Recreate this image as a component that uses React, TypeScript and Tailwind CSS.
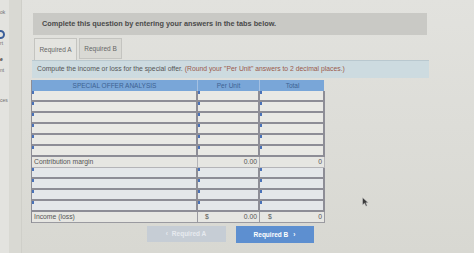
import React from "react";

const font = { fontFamily: '"Liberation Sans", Arial, sans-serif' };

function Tick() {
  return <span className="absolute left-0 top-0 w-[2px] h-[3px] bg-[#4a72b8]" />;
}

function InputRow({ tint }: { tint?: boolean }) {
  const cell =
    "relative h-[11px] border-b-2 border-r-2 border-[#8d8d96] " +
    (tint ? "bg-[#e4e7ea]" : "bg-[#e9e9e5]");
  return (
    <div className="grid grid-cols-[166px_62px_65px]">
      <div className={cell}>
        <Tick />
      </div>
      <div className={cell}>
        <Tick />
      </div>
      <div className={cell}>
        <Tick />
      </div>
    </div>
  );
}

export default function App() {
  return (
    <div
      className="relative w-[474px] h-[253px] flex overflow-hidden bg-gradient-to-b from-[#e2e2de] to-[#d8d8d2]"
      style={font}
    >
      {/* left strip */}
      <div className="w-[9px] shrink-0 flex flex-col bg-[#e3e3df] text-[5px] text-[#707070] leading-none">
        <span className="mt-[10px]">ok</span>
        <span className="mt-[15px] -ml-[4px] w-[9px] h-[9px] rounded-full border-2 border-[#3b5f9a]" />
        <span className="mt-[2px]">rt</span>
        <span className="mt-[11px] text-[#333] font-bold">e</span>
        <span className="mt-[6px]">nt</span>
        <span className="mt-[25px]">ces</span>
      </div>
      <div className="w-[13px] shrink-0 bg-[#d9d9d3] border-r border-[#cfcfc9]" />

      {/* main */}
      <div className="flex-1 flex flex-col pl-[10px] pt-[13px]">
        <div className="ml-[1px] w-[394px] h-[22px] bg-[#c9c9c5] flex items-center pl-[9px] text-[7.3px] font-bold text-[#4a4a4a] whitespace-nowrap">
          Complete this question by entering your answers in the tabs below.
        </div>

        <div className="flex gap-[2px] ml-[2px] mt-[3px] h-[22px]">
          <div className="w-[43px] bg-[#e4e4e0] border border-b-0 border-[#c4c4c0] flex items-center justify-center text-[6.5px] text-[#666]">
            Required A
          </div>
          <div className="w-[43px] h-[21px] bg-[#d9d9d4] border border-[#c4c4c0] flex items-center justify-center text-[6.5px] text-[#666]">
            Required B
          </div>
        </div>

        <div className="w-[397px] h-[18px] bg-[#cddbe0] border-t border-[#b9c8cf] flex items-center pl-[5px] text-[6.8px] text-[#555] whitespace-nowrap">
          Compute the income or loss for the special offer.{" "}
          <span className="ml-[2px] text-[#9a5a4c]">
            (Round your "Per Unit" answers to 2 decimal places.)
          </span>
        </div>

        {/* table */}
        <div className="mt-[2px] -ml-[1px] w-[293px] flex flex-col border-l border-[#8d8d96]">
          <div className="grid grid-cols-[166px_62px_65px] h-[11px] bg-[#79a6d8] text-[6.5px] text-[#3d6292]">
            <div className="flex items-center justify-center border-r border-[#a4c0e2]">SPECIAL OFFER ANALYSIS</div>
            <div className="flex items-center justify-center border-r border-[#a4c0e2]">Per Unit</div>
            <div className="flex items-center justify-center">Total</div>
          </div>
          <InputRow />
          <InputRow />
          <InputRow />
          <InputRow />
          <InputRow />
          <InputRow />
          <div className="grid grid-cols-[166px_62px_65px] h-[11px] bg-[#e6e6e2] text-[6.8px] text-[#555]">
            <div className="flex items-center pl-[2px] border-r border-b border-[#b4b4b8]">Contribution margin</div>
            <div className="flex items-center justify-end pr-[2px] border-r border-b border-[#b4b4b8]">0.00</div>
            <div className="flex items-center justify-end pr-[2px] border-r border-b border-[#b4b4b8]">0</div>
          </div>
          <InputRow tint />
          <InputRow tint />
          <InputRow tint />
          <InputRow tint />
          <div className="grid grid-cols-[166px_62px_65px] h-[11px] bg-[#e6e6e2] text-[6.8px] text-[#555]">
            <div className="flex items-center pl-[2px] border-r border-b border-[#9a9aa0]">Income (loss)</div>
            <div className="flex items-center justify-between pl-[7px] pr-[2px] border-r border-b border-[#9a9aa0]">
              <span>$</span>
              <span>0.00</span>
            </div>
            <div className="flex items-center justify-between pl-[8px] pr-[2px] border-r border-b border-[#9a9aa0]">
              <span>$</span>
              <span>0</span>
            </div>
          </div>
        </div>

        {/* buttons */}
        <div className="w-[394px] ml-[1px] mt-[3px] flex justify-center gap-[10px]">
          <div className="w-[79px] h-[16px] bg-[#c6cdd5] flex items-center justify-center text-[6.5px] text-[#e6eaef] font-bold">
            <span className="mr-[4px]">‹</span>Required A
          </div>
          <div className="w-[78px] h-[17px] bg-[#5d8fd0] flex items-center justify-center text-[6.5px] text-white font-bold">
            Required B<span className="ml-[5px]">›</span>
          </div>
        </div>
      </div>

      {/* mouse cursor */}
      <svg className="absolute left-[362px] top-[197px]" width="7" height="10" viewBox="0 0 7 10">
        <path d="M0.5 0.5 L0.5 8 L2.5 6.2 L4 9.2 L5.2 8.6 L3.8 5.8 L6.3 5.8 Z" fill="#3a3a3a" stroke="#d0d0d0" strokeWidth="0.5" />
      </svg>
    </div>
  );
}
